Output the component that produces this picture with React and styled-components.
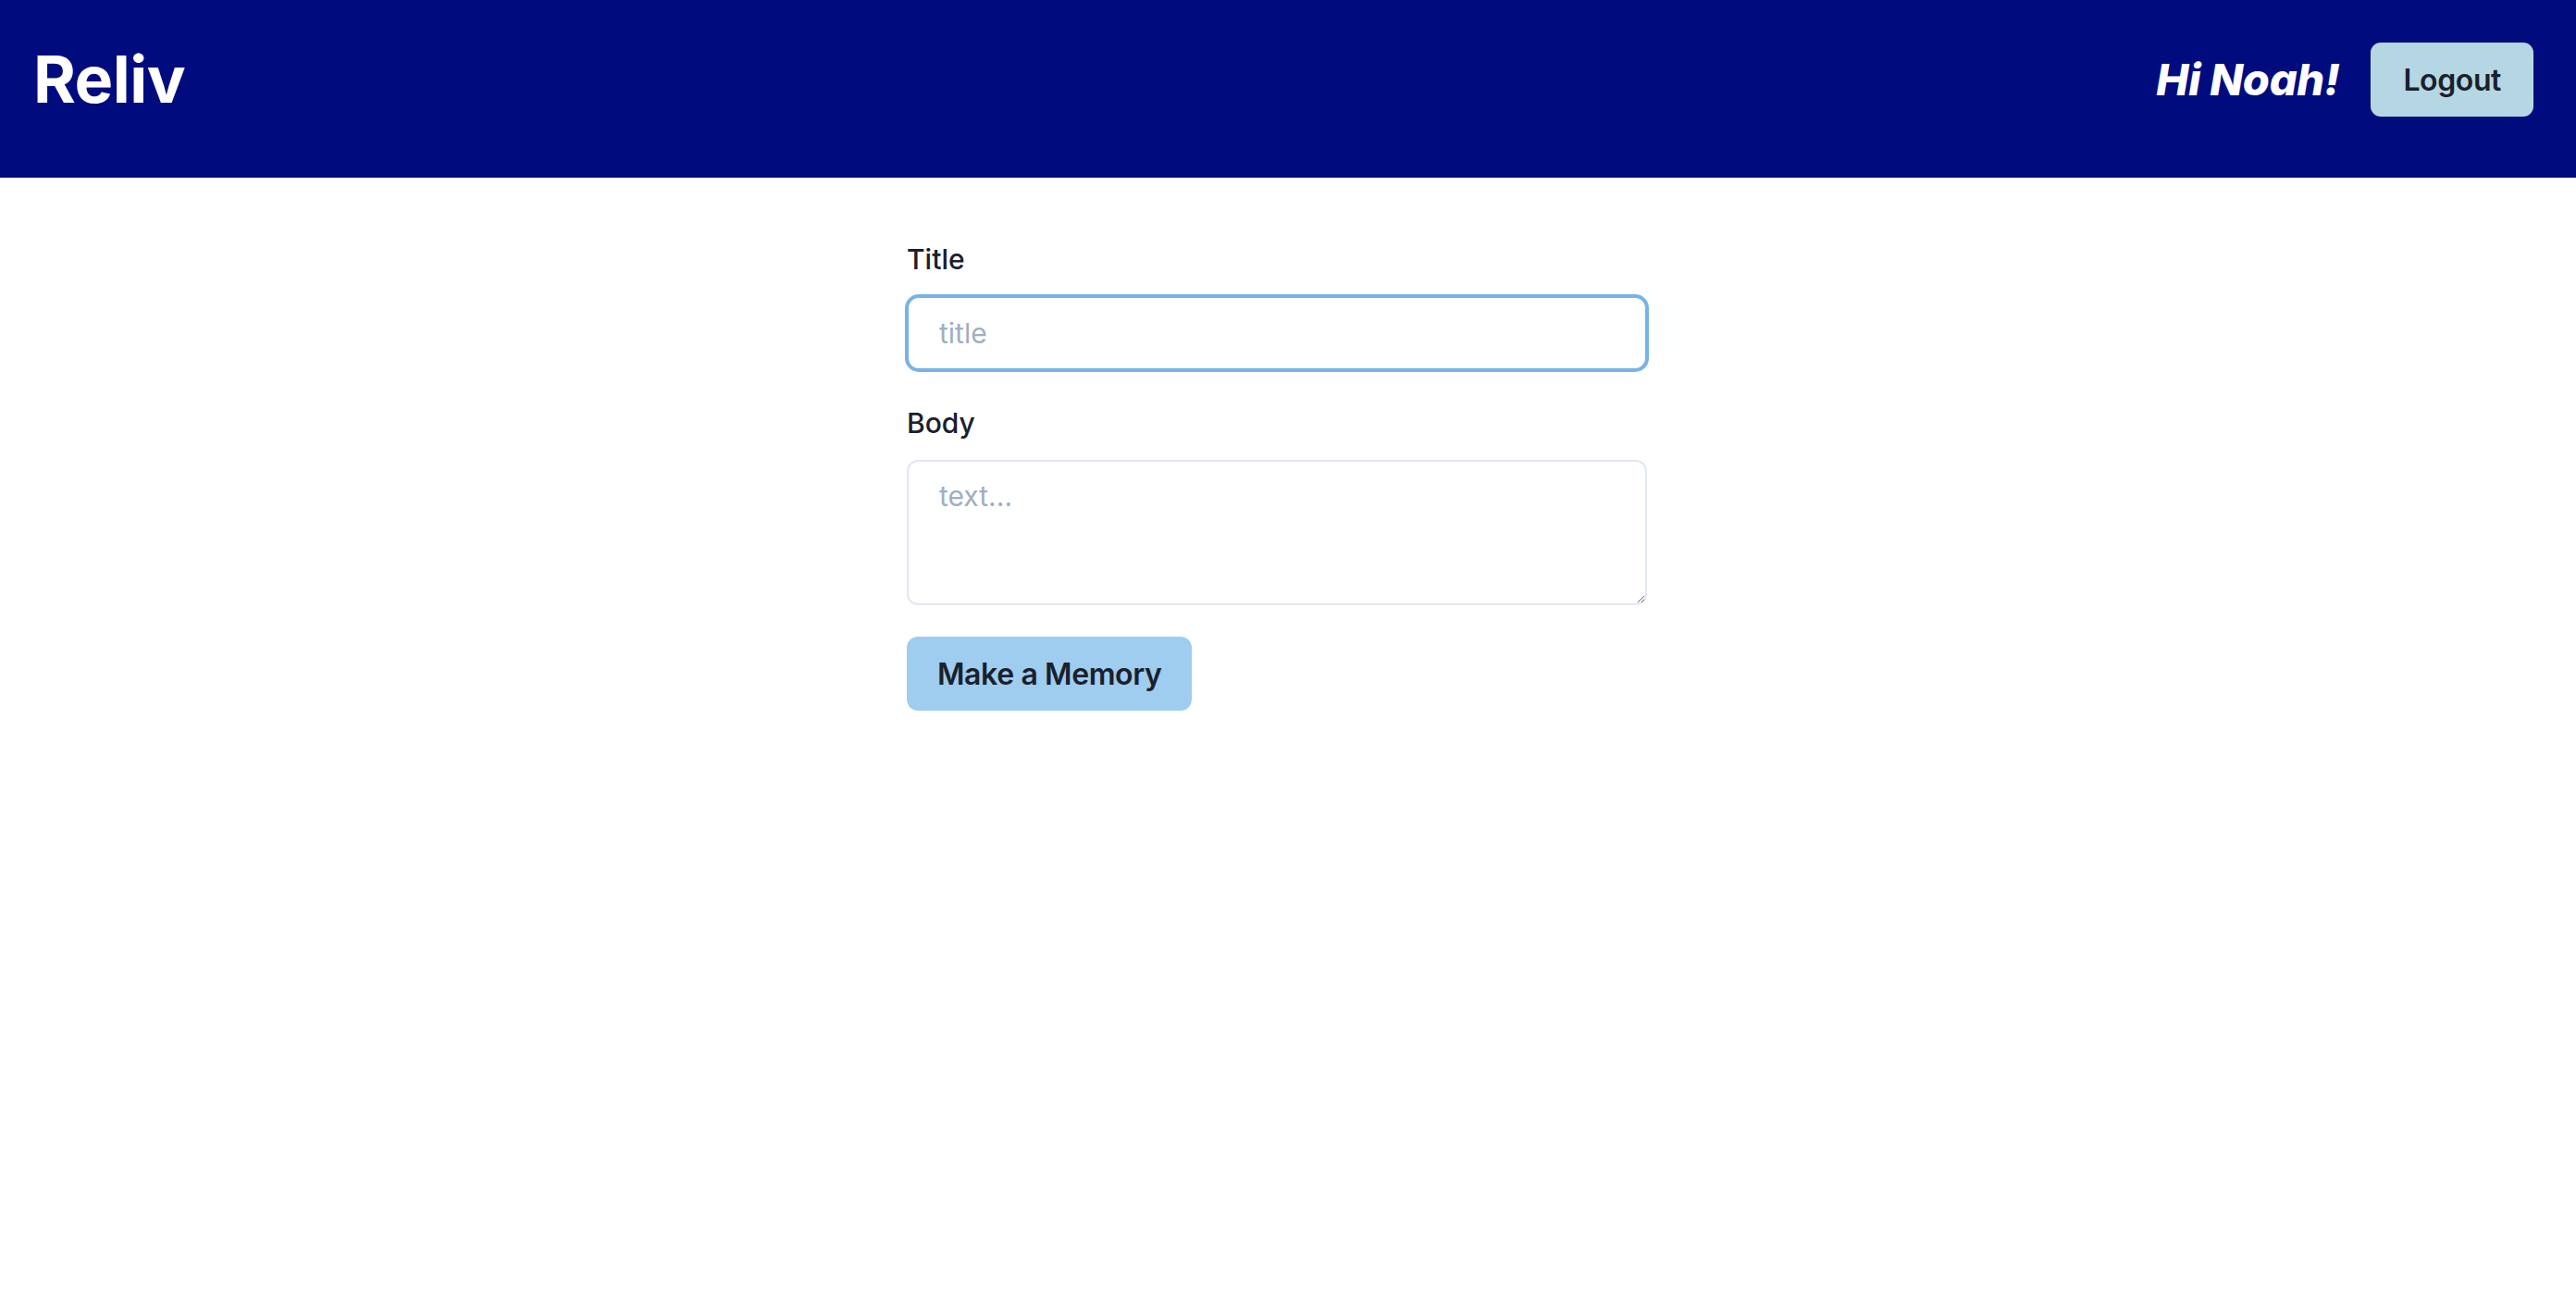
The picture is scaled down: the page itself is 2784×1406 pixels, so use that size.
import React from "react";
import styled, { createGlobalStyle, css } from "styled-components";

const Global = createGlobalStyle`
  * { box-sizing: border-box; }
  html, body { margin: 0; padding: 0; background: #ffffff; }
  body { font-family: Inter, "Noto Sans", "Liberation Sans", sans-serif; color: #1a202c; }
`;

const Header = styled.header`
  height: 192px;
  background: #000c7e;
  display: flex;
  align-items: center;
  justify-content: space-between;
  padding: 46px 46px 66px 36px;
`;

const Brand = styled.h1`
  margin: 0;
  font-size: 70px;
  font-weight: 700;
  color: #ffffff;
  line-height: 1.2;
  letter-spacing: -0.5px;
`;

const UserArea = styled.div`
  display: flex;
  align-items: center;
  gap: 34px;
`;

const Greeting = styled.h2`
  margin: 0;
  font-size: 47px;
  font-weight: 800;
  font-style: italic;
  color: #ffffff;
  line-height: 1.2;
  letter-spacing: -0.3px;
`;

const Button = styled.button`
  height: 80px;
  padding: 0 ${(p) => p.$px || 34}px;
  border: none;
  border-radius: ${(p) => p.$radius || 12}px;
  background: ${(p) => p.$bg};
  color: #1a202c;
  font-family: Inter, "Noto Sans", sans-serif;
  font-size: 32px;
  font-weight: 560;
  letter-spacing: -0.4px;
  cursor: pointer;
`;

const Main = styled.main`
  display: flex;
  justify-content: center;
  padding: 66px 0 0 0;
`;

const Form = styled.form`
  width: 800px;
  margin-left: -24px;
  display: flex;
  flex-direction: column;
`;

const Field = styled.div`
  display: flex;
  flex-direction: column;
  margin-bottom: ${(p) => p.$mb}px;
`;

const Label = styled.label`
  font-size: 30px;
  font-weight: 500;
  line-height: 45px;
  color: #1a202c;
  margin-bottom: 17px;
`;

const fieldBase = css`
  width: 100%;
  font-family: Inter, "Noto Sans", sans-serif;
  font-size: 30px;
  color: #1a202c;
  background: #ffffff;
  border: 2px solid #e2e8f0;
  outline: none;
  &::placeholder { color: #a0aec0; opacity: 1; }
`;

const TextInput = styled.input`
  ${fieldBase}
  height: 80px;
  padding: 0 33px;
  border-radius: 13px;
  ${(p) =>
    p.$focused &&
    css`
      border-color: #76b3e8;
      box-shadow: 0 0 0 2px #76b3e8;
    `}
  &:focus {
    border-color: #76b3e8;
    box-shadow: 0 0 0 2px #76b3e8;
  }
`;

const TextArea = styled.textarea`
  ${fieldBase}
  height: 157px;
  padding: 15px 33px;
  line-height: 1.5;
  border-radius: 12px;
  resize: vertical;
`;

const Actions = styled.div`
  display: flex;
`;

export default function App() {
  return (
    <>
      <Global />
      <Header>
        <Brand>Reliv</Brand>
        <UserArea>
          <Greeting>Hi Noah!</Greeting>
          <Button type="button" $bg="#b5d7e3" $px={35} $radius={11}>
            Logout
          </Button>
        </UserArea>
      </Header>
      <Main>
        <Form onSubmit={(e) => e.preventDefault()}>
          <Field $mb={35}>
            <Label htmlFor="title">Title</Label>
            <TextInput id="title" placeholder="title" autoFocus $focused />
          </Field>
          <Field $mb={34}>
            <Label htmlFor="body">Body</Label>
            <TextArea id="body" placeholder="text..." />
          </Field>
          <Actions>
            <Button type="submit" $bg="#9ecdf0" $px={33} $radius={12}>
              Make a Memory
            </Button>
          </Actions>
        </Form>
      </Main>
    </>
  );
}
